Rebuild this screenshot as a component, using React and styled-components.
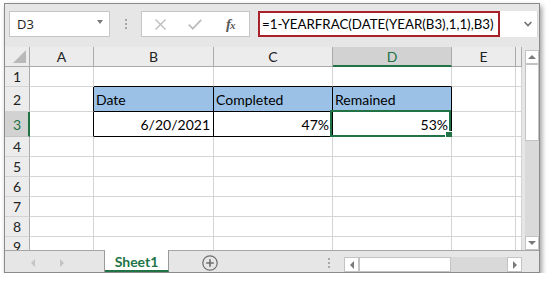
import React from 'react';
import styled, { createGlobalStyle } from 'styled-components';

const GlobalStyle = createGlobalStyle`
  html, body { margin: 0; padding: 0; background: #fff; }
  body { font-family: "Lato", "Liberation Sans", sans-serif; }
`;

const GREEN = '#217346';
const GRID = '#d4d4d4';
const HEAD_LINE = '#ababab';

const Page = styled.div`
  padding: 3px 0 0 4px;
`;

const Window = styled.div`
  width: 536px;
  height: 270px;
  box-sizing: border-box;
  border: 1px solid #8a8a8a;
  background: #e6e6e6;
  box-shadow: 2px 3px 5px rgba(0, 0, 0, 0.38);
  display: flex;
  flex-direction: column;
  overflow: hidden;
`;

/* ---------- formula bar ---------- */
const FormulaBar = styled.div`
  flex: none;
  height: 43px;
  box-sizing: border-box;
  padding: 7px 1px 0 4px;
  display: flex;
  align-items: flex-start;
`;

const NameBox = styled.div`
  width: 101px;
  height: 26px;
  box-sizing: border-box;
  background: #fff;
  border: 1px solid #c6c6c6;
  display: flex;
  align-items: center;
  justify-content: space-between;
  padding: 0 6px 0 7px;
  font-family: "Open Sans", sans-serif;
  font-size: 13px;
  color: #1e1e1e;
`;

const Caret = styled.span`
  width: 0;
  height: 0;
  border-left: 3.5px solid transparent;
  border-right: 3.5px solid transparent;
  border-top: 4px solid #7a7a7a;
  margin-top: -4px;
`;

const Grip = styled.div`
  width: 31px;
  height: 26px;
  display: flex;
  flex-direction: column;
  align-items: center;
  justify-content: center;
  gap: 2px;
  & > span {
    width: 2px;
    height: 2px;
    background: #a6a6a6;
  }
`;

const FxBox = styled.div`
  width: 109px;
  height: 26px;
  box-sizing: border-box;
  background: #fff;
  border: 1px solid #c6c6c6;
  display: flex;
  align-items: center;
  padding-left: 13px;
  gap: 22px;
`;

const Fx = styled.span`
  font-family: "Liberation Serif", serif;
  font-style: italic;
  font-weight: bold;
  font-size: 15px;
  color: #5a5a5a;
  letter-spacing: -1px;
  margin-left: 2px;
  & > small { font-size: 11px; }
`;

const FormulaInput = styled.div`
  flex: 1;
  height: 26px;
  margin-left: 8px;
  box-sizing: border-box;
  background: #fff;
  border-right: 1px solid #d6d6d6;
  display: flex;
  align-items: center;
  justify-content: space-between;
  padding-right: 5px;
`;

const RedBox = styled.div`
  width: 242px;
  height: 26px;
  box-sizing: border-box;
  border: 2px solid #a8202a;
  display: flex;
  align-items: center;
  padding-left: 2px;
  font-size: 13.3px;
  color: #000;
  white-space: nowrap;
  overflow: hidden;
`;

/* ---------- sheet ---------- */
const SheetArea = styled.div`
  flex: none;
  height: 203px;
  display: flex;
  overflow: hidden;
`;

const Grid = styled.div`
  width: 517px;
  flex: none;
  display: flex;
  flex-direction: column;
  background: #fff;
`;

const Row = styled.div`
  display: flex;
  flex: none;
  height: ${(p) => p.$h}px;
`;

const HeadCell = styled.div`
  box-sizing: border-box;
  flex: none;
  width: ${(p) => p.$w}px;
  height: 100%;
  background: ${(p) => (p.$active ? '#d2d2d2' : '#ececec')};
  border-right: 1px solid ${HEAD_LINE};
  border-bottom: ${(p) => (p.$active ? `2px solid ${GREEN}` : `1px solid ${HEAD_LINE}`)};
  color: ${(p) => (p.$active ? GREEN : '#222')};
  font-size: 14px;
  display: flex;
  align-items: center;
  justify-content: center;
  padding-top: ${(p) => (p.$active ? 1 : 0)}px;
  position: relative;
`;

const Corner = styled(HeadCell)`
  &::after {
    content: '';
    position: absolute;
    right: 3px;
    bottom: 3px;
    width: 0;
    height: 0;
    border-left: 13px solid transparent;
    border-bottom: 13px solid #b9b9b9;
  }
`;

const RowHead = styled.div`
  box-sizing: border-box;
  flex: none;
  width: 25px;
  height: 100%;
  background: ${(p) => (p.$active ? '#d2d2d2' : '#ececec')};
  border-right: ${(p) => (p.$active ? `2px solid ${GREEN}` : `1px solid ${HEAD_LINE}`)};
  border-bottom: 1px solid ${(p) => (p.$active ? '#c4c4c4' : GRID)};
  color: ${(p) => (p.$active ? GREEN : '#222')};
  font-size: 14px;
  display: flex;
  align-items: ${(p) => (p.$clip ? 'flex-start' : 'center')};
  justify-content: center;
  padding-left: ${(p) => (p.$active ? 1 : 0)}px;
  padding-top: ${(p) => (p.$clip ? 1 : 0)}px;
`;

const Cell = styled.div`
  box-sizing: border-box;
  flex: none;
  width: ${(p) => p.$w}px;
  height: 100%;
  border-right: 1px solid ${(p) => p.$rb || GRID};
  border-bottom: 1px solid ${(p) => p.$bb || GRID};
  background: ${(p) => p.$bg || '#fff'};
  display: flex;
  align-items: flex-end;
  justify-content: ${(p) => (p.$right ? 'flex-end' : 'flex-start')};
  padding: 0 3px 2px 2px;
  font-size: 14px;
  line-height: 18px;
  color: #000;
  white-space: nowrap;
  position: relative;
`;

const Selection = styled.div`
  position: absolute;
  left: -3px;
  top: -2px;
  right: 0;
  bottom: -1px;
  border: 2px solid ${GREEN};
  pointer-events: none;
`;

const Handle = styled.div`
  position: absolute;
  right: -3px;
  bottom: -3px;
  width: 6px;
  height: 6px;
  background: ${GREEN};
  border-left: 1px solid #fff;
  border-top: 1px solid #fff;
`;

const VScroll = styled.div`
  width: 17px;
  flex: none;
  box-sizing: border-box;
  padding: 3px 0 0 3px;
  display: flex;
  flex-direction: column;
  background: #e6e6e6;
`;

const SBtn = styled.div`
  width: 14px;
  height: ${(p) => p.$h || 14}px;
  flex: none;
  box-sizing: border-box;
  background: #fff;
  border: 1px solid #c3c3c3;
  display: flex;
  align-items: center;
  justify-content: center;
`;

const VTrack = styled.div`
  flex: 1;
  width: 14px;
  background: #dadada;
`;

const Tri = styled.span`
  width: 0;
  height: 0;
  ${(p) =>
    p.$dir === 'up'
      ? `border-left: 4px solid transparent; border-right: 4px solid transparent; border-bottom: 4px solid ${p.$c || '#7a7a7a'};`
      : p.$dir === 'down'
      ? `border-left: 4px solid transparent; border-right: 4px solid transparent; border-top: 4px solid ${p.$c || '#7a7a7a'};`
      : p.$dir === 'left'
      ? `border-top: 4px solid transparent; border-bottom: 4px solid transparent; border-right: 4px solid ${p.$c || '#7a7a7a'};`
      : `border-top: 4px solid transparent; border-bottom: 4px solid transparent; border-left: 4px solid ${p.$c || '#7a7a7a'};`}
`;

/* ---------- tab bar ---------- */
const TabBar = styled.div`
  flex: none;
  height: 22px;
  box-sizing: border-box;
  border-top: 1px solid #a6a6a6;
  display: flex;
  align-items: stretch;
`;

const Nav = styled.div`
  width: 100px;
  flex: none;
  box-sizing: border-box;
  border-right: 1px solid #9a9a9a;
  display: flex;
  align-items: center;
  padding: 2px 0 0 26px;
  gap: 25px;
`;

const Tab = styled.div`
  width: 64px;
  flex: none;
  box-sizing: border-box;
  margin-top: -1px;
  background: #fff;
  border-right: 1px solid #9a9a9a;
  border-bottom: 2px solid ${GREEN};
  display: flex;
  align-items: center;
  justify-content: center;
  padding-top: 2px;
  font-weight: bold;
  font-size: 14px;
  color: ${GREEN};
`;

const AddArea = styled.div`
  flex: 1;
  display: flex;
  align-items: center;
  padding: 2px 0 0 33px;
`;

const VGrip = styled.div`
  display: flex;
  flex-direction: column;
  justify-content: center;
  gap: 2px;
  margin-right: 14px;
  padding-top: 3px;
  & > span { width: 2px; height: 2px; background: #a9a9a9; }
`;

const HScroll = styled.div`
  width: 178px;
  flex: none;
  display: flex;
  align-self: flex-start;
  margin: 6px 17px 0 0;
  height: 15px;
  background: #d9d9d9;
`;

const HBtn = styled.div`
  width: ${(p) => p.$w}px;
  height: 15px;
  flex: none;
  box-sizing: border-box;
  background: #fff;
  border: 1px solid #c3c3c3;
  display: flex;
  align-items: center;
  justify-content: center;
`;

const HTrack = styled.div`
  flex: 1;
`;

/* ---------- data ---------- */
const COLS = [
  { id: 'A', w: 64 },
  { id: 'B', w: 120 },
  { id: 'C', w: 119 },
  { id: 'D', w: 119 },
  { id: 'E', w: 64 },
  { id: '', w: 6 },
];

const ROWS = [
  { n: 1, h: 20 },
  { n: 2, h: 25 },
  { n: 3, h: 25 },
  { n: 4, h: 20 },
  { n: 5, h: 20 },
  { n: 6, h: 20 },
  { n: 7, h: 20 },
  { n: 8, h: 20 },
  { n: 9, h: 20 },
];

const DATA = {
  B2: { text: 'Date', head: true },
  C2: { text: 'Completed', head: true },
  D2: { text: 'Remained', head: true },
  B3: { text: '6/20/2021', right: true },
  C3: { text: '47%', right: true },
  D3: { text: '53%', right: true },
};

const inTable = (c) => c === 'B' || c === 'C' || c === 'D';

function XIcon() {
  return (
    <svg width="11" height="11" viewBox="0 0 11 11">
      <path d="M0.5 0.5 L10.5 10.5 M10.5 0.5 L0.5 10.5" stroke="#bdbdbd" strokeWidth="1.4" fill="none" />
    </svg>
  );
}

function CheckIcon() {
  return (
    <svg width="14" height="11" viewBox="0 0 14 11">
      <path d="M0.8 5.6 L4.8 9.6 L13.2 0.8" stroke="#bdbdbd" strokeWidth="1.8" fill="none" />
    </svg>
  );
}

function Chevron() {
  return (
    <svg width="8" height="6" viewBox="0 0 8 6">
      <path d="M0.6 1 L4 4.6 L7.4 1" stroke="#707070" strokeWidth="1.5" fill="none" />
    </svg>
  );
}

function PlusCircle() {
  return (
    <svg width="16" height="16" viewBox="0 0 16 16">
      <circle cx="8" cy="8" r="7.2" stroke="#6e6e6e" strokeWidth="1.2" fill="none" />
      <path d="M8 4.2 V11.8 M4.2 8 H11.8" stroke="#6e6e6e" strokeWidth="1.6" />
    </svg>
  );
}

export default function App() {
  return (
    <Page>
      <GlobalStyle />
      <Window>
        <FormulaBar>
          <NameBox>
            <span>D3</span>
            <Caret />
          </NameBox>
          <Grip>
            <span />
            <span />
            <span />
          </Grip>
          <FxBox>
            <XIcon />
            <CheckIcon />
            <Fx>
              f<small>x</small>
            </Fx>
          </FxBox>
          <FormulaInput>
            <RedBox>=1-YEARFRAC(DATE(YEAR(B3),1,1),B3)</RedBox>
            <Chevron />
          </FormulaInput>
        </FormulaBar>

        <SheetArea>
          <Grid>
            <Row $h={20}>
              <Corner $w={25} />
              {COLS.map((c, i) => (
                <HeadCell key={i} $w={c.w} $active={c.id === 'D'}>
                  {c.id}
                </HeadCell>
              ))}
            </Row>
            {ROWS.map((r) => (
              <Row key={r.n} $h={r.h}>
                <RowHead $active={r.n === 3} $clip={r.n === 9}>{r.n}</RowHead>
                {COLS.map((c, i) => {
                  const key = c.id + r.n;
                  const d = DATA[key];
                  const tableRow = r.n === 2 || r.n === 3;
                  const rb = (inTable(c.id) || c.id === 'A') && tableRow ? '#000' : undefined;
                  const bb = inTable(c.id) && r.n >= 1 && r.n <= 3 ? '#000' : undefined;
                  return (
                    <Cell
                      key={i}
                      $w={c.w}
                      $rb={rb}
                      $bb={bb}
                      $bg={d && d.head ? '#9bc2e6' : undefined}
                      $right={d && d.right}
                    >
                      {d ? d.text : null}
                      {key === 'D3' && (
                        <Selection>
                          <Handle />
                        </Selection>
                      )}
                    </Cell>
                  );
                })}
              </Row>
            ))}
          </Grid>
          <VScroll>
            <SBtn>
              <Tri $dir="up" />
            </SBtn>
            <SBtn $h={77} />
            <VTrack />
            <SBtn>
              <Tri $dir="down" />
            </SBtn>
          </VScroll>
        </SheetArea>

        <TabBar>
          <Nav>
            <Tri $dir="left" $c="#c4c4c4" />
            <Tri $dir="right" $c="#c4c4c4" />
          </Nav>
          <Tab>Sheet1</Tab>
          <AddArea>
            <PlusCircle />
          </AddArea>
          <VGrip>
            <span />
            <span />
            <span />
          </VGrip>
          <HScroll>
            <HBtn $w={15}>
              <Tri $dir="left" />
            </HBtn>
            <HBtn $w={92} />
            <HTrack />
            <HBtn $w={15}>
              <Tri $dir="right" />
            </HBtn>
          </HScroll>
        </TabBar>
      </Window>
    </Page>
  );
}
